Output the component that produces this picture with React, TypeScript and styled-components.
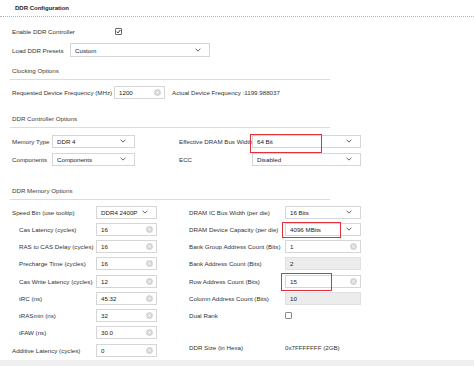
import React from 'react';
import styled, { createGlobalStyle } from 'styled-components';

const GlobalStyle = createGlobalStyle`
  html, body {
    margin: 0;
    padding: 0;
    background: #ffffff;
  }
  body {
    font-family: "Liberation Sans", Arial, sans-serif;
    font-size: 6.2px;
    color: #333333;
  }
`;

const Page = styled.div`
  width: 474px;
  height: 366px;
  overflow: hidden;
  display: flex;
  flex-direction: column;
  background: #ffffff;
`;

const TitleBar = styled.div`
  height: 16px;
  padding-left: 15px;
  display: flex;
  align-items: center;
  font-weight: bold;
  font-size: 6px;
  color: #222;
  border-bottom: 1px dotted #b5b5b5;
`;

const Body = styled.div`
  padding: 5px 0 0 10px;
  display: flex;
  flex-direction: column;
`;

const Row = styled.div<{ $h?: number; $mt?: number }>`
  display: flex;
  align-items: center;
  height: ${(p) => p.$h ?? 18}px;
  margin-top: ${(p) => p.$mt ?? 0}px;
  flex-shrink: 0;
`;

const Heading = styled.div<{ $mt: number }>`
  width: 318px;
  height: 18px;
  margin-top: ${(p) => p.$mt}px;
  padding-left: 2px;
  display: flex;
  align-items: center;
  border-bottom: 1px solid #dcdcdc;
  color: #3a3a3a;
  flex-shrink: 0;
`;

const Label = styled.div<{ $w: number; $indent?: boolean }>`
  width: ${(p) => p.$w}px;
  padding-left: ${(p) => (p.$indent ? 9 : 2)}px;
  box-sizing: border-box;
  white-space: nowrap;
  flex-shrink: 0;
`;

const Field = styled.div<{ $w: number; $h?: number; $grey?: boolean }>`
  position: relative;
  width: ${(p) => p.$w}px;
  height: ${(p) => p.$h ?? 13}px;
  box-sizing: border-box;
  border: 1px solid ${(p) => (p.$grey ? '#e0e0e0' : '#d6d6d6')};
  background: ${(p) => (p.$grey ? '#ececec' : '#ffffff')};
  display: flex;
  align-items: center;
  justify-content: space-between;
  padding: 0 4px;
  color: #222;
  flex-shrink: 0;
`;

const Highlight = styled.div<{ $l: number; $t: number; $w: number; $h: number }>`
  position: absolute;
  left: ${(p) => p.$l}px;
  top: ${(p) => p.$t}px;
  width: ${(p) => p.$w}px;
  height: ${(p) => p.$h}px;
  box-sizing: border-box;
  border: 1.5px solid #e0303a;
  pointer-events: none;
`;

const Box = styled.div<{ $checked?: boolean }>`
  width: 7px;
  height: 7px;
  box-sizing: border-box;
  border: 1px solid ${(p) => (p.$checked ? '#666' : '#8a8a8a')};
  border-radius: 1px;
  background: #fff;
  display: flex;
  align-items: center;
  justify-content: center;
`;

const Plain = styled.div`
  color: #333;
  white-space: nowrap;
`;

const Columns = styled.div<{ $mt: number }>`
  display: flex;
  margin-top: ${(p) => p.$mt}px;
`;

const Column = styled.div<{ $w: number }>`
  width: ${(p) => p.$w}px;
  display: flex;
  flex-direction: column;
  flex-shrink: 0;
`;

const Footer = styled.div`
  flex: 1;
  margin-top: 1px;
  background: #efefef;
`;

const Chevron = () => (
  <svg width="6" height="4" viewBox="0 0 6 4" style={{ marginRight: 4 }}>
    <path d="M0.6 0.8 L3 3.1 L5.4 0.8" fill="none" stroke="#555" strokeWidth="0.9" />
  </svg>
);

const Clear = () => (
  <svg width="7" height="7" viewBox="0 0 7 7" style={{ marginRight: -1 }}>
    <circle cx="3.5" cy="3.5" r="3.1" fill="#d6d6d6" stroke="#c4c4c4" strokeWidth="0.5" />
    <path d="M2.3 2.3 L4.7 4.7 M4.7 2.3 L2.3 4.7" stroke="#fff" strokeWidth="0.9" />
  </svg>
);

const Check = () => (
  <svg width="5" height="5" viewBox="0 0 5 5">
    <path d="M0.7 2.6 L2 3.9 L4.4 0.9" fill="none" stroke="#333" strokeWidth="1" />
  </svg>
);

type Hl = { l: number; t: number; w: number; h: number };

function Select({ w, value, h, hl }: { w: number; value: string; h?: number; hl?: Hl }) {
  return (
    <Field $w={w} $h={h}>
      <span>{value}</span>
      <Chevron />
      {hl && <Highlight $l={hl.l} $t={hl.t} $w={hl.w} $h={hl.h} />}
    </Field>
  );
}

function Input({ w, value, grey, hl }: { w: number; value: string; grey?: boolean; hl?: Hl }) {
  return (
    <Field $w={w} $grey={grey}>
      <span>{value}</span>
      {!grey && <Clear />}
      {hl && <Highlight $l={hl.l} $t={hl.t} $w={hl.w} $h={hl.h} />}
    </Field>
  );
}

const PITCH = 17.25;

const leftRows: { label: string; value: string; indent?: boolean; select?: boolean }[] = [
  { label: 'Speed Bin (use tooltip)', value: 'DDR4 2400P', select: true },
  { label: 'Cas Latency (cycles)', value: '16', indent: true },
  { label: 'RAS to CAS Delay (cycles)', value: '16', indent: true },
  { label: 'Precharge Time (cycles)', value: '16', indent: true },
  { label: 'Cas Write Latency (cycles)', value: '12', indent: true },
  { label: 'tRC (ns)', value: '45.32', indent: true },
  { label: 'tRASmin (ns)', value: '32', indent: true },
  { label: 'tFAW (ns)', value: '30.0', indent: true },
  { label: 'Additive Latency (cycles)', value: '0' },
];

export default function App() {
  return (
    <Page>
      <GlobalStyle />
      <TitleBar>DDR Configuration</TitleBar>
      <Body>
        <Row>
          <Label $w={105}>Enable DDR Controller</Label>
          <Box $checked>
            <Check />
          </Box>
        </Row>
        <Row $mt={1}>
          <Label $w={60}>Load DDR Presets</Label>
          <Select w={140} h={14} value="Custom" />
        </Row>

        <Heading $mt={2}>Clocking Options</Heading>
        <Row $mt={3}>
          <Label $w={104}>Requested Device Frequency (MHz)</Label>
          <Input w={51} value="1200" />
          <Plain style={{ marginLeft: 7 }}>Actual Device Frequency :1199.988037</Plain>
        </Row>

        <Heading $mt={8}>DDR Controller Options</Heading>
        <Columns $mt={4}>
          <Column $w={167}>
            <Row>
              <Label $w={42}>Memory Type</Label>
              <Select w={83} value="DDR 4" />
            </Row>
            <Row>
              <Label $w={42}>Components</Label>
              <Select w={83} value="Components" />
            </Row>
          </Column>
          <Column $w={190}>
            <Row>
              <Label $w={75}>Effective DRAM Bus Width</Label>
              <Select w={109} value="64 Bit" hl={{ l: -3, t: -2, w: 72, h: 19 }} />
            </Row>
            <Row>
              <Label $w={75}>ECC</Label>
              <Select w={109} value="Disabled" />
            </Row>
          </Column>
        </Columns>

        <Heading $mt={13}>DDR Memory Options</Heading>
        <Columns $mt={3.5}>
          <Column $w={177}>
            {leftRows.map((r) => (
              <Row key={r.label} $h={PITCH}>
                <Label $w={86} $indent={r.indent}>
                  {r.label}
                </Label>
                {r.select ? <Select w={61} value={r.value} /> : <Input w={61} value={r.value} />}
              </Row>
            ))}
          </Column>
          <Column $w={190}>
            <Row $h={PITCH}>
              <Label $w={98}>DRAM IC Bus Width (per die)</Label>
              <Select w={76} value="16 Bits" />
            </Row>
            <Row $h={PITCH}>
              <Label $w={98}>DRAM Device Capacity (per die)</Label>
              <Select w={76} value="4096 MBits" hl={{ l: -4, t: -2, w: 59, h: 16 }} />
            </Row>
            <Row $h={PITCH}>
              <Label $w={98}>Bank Group Address Count (Bits)</Label>
              <Input w={76} value="1" />
            </Row>
            <Row $h={PITCH}>
              <Label $w={98}>Bank Address Count (Bits)</Label>
              <Input w={76} value="2" grey />
            </Row>
            <Row $h={PITCH}>
              <Label $w={98}>Row Address Count (Bits)</Label>
              <Input w={76} value="15" hl={{ l: -5, t: -2.5, w: 51, h: 18 }} />
            </Row>
            <Row $h={PITCH}>
              <Label $w={98}>Column Address Count (Bits)</Label>
              <Input w={76} value="10" grey />
            </Row>
            <Row $h={PITCH}>
              <Label $w={98}>Dual Rank</Label>
              <Box />
            </Row>
            <Row $h={PITCH} $mt={14.5}>
              <Label $w={98}>DDR Size (in Hexa)</Label>
              <Plain>0x7FFFFFFF (2GB)</Plain>
            </Row>
          </Column>
        </Columns>
      </Body>
      <Footer />
    </Page>
  );
}
